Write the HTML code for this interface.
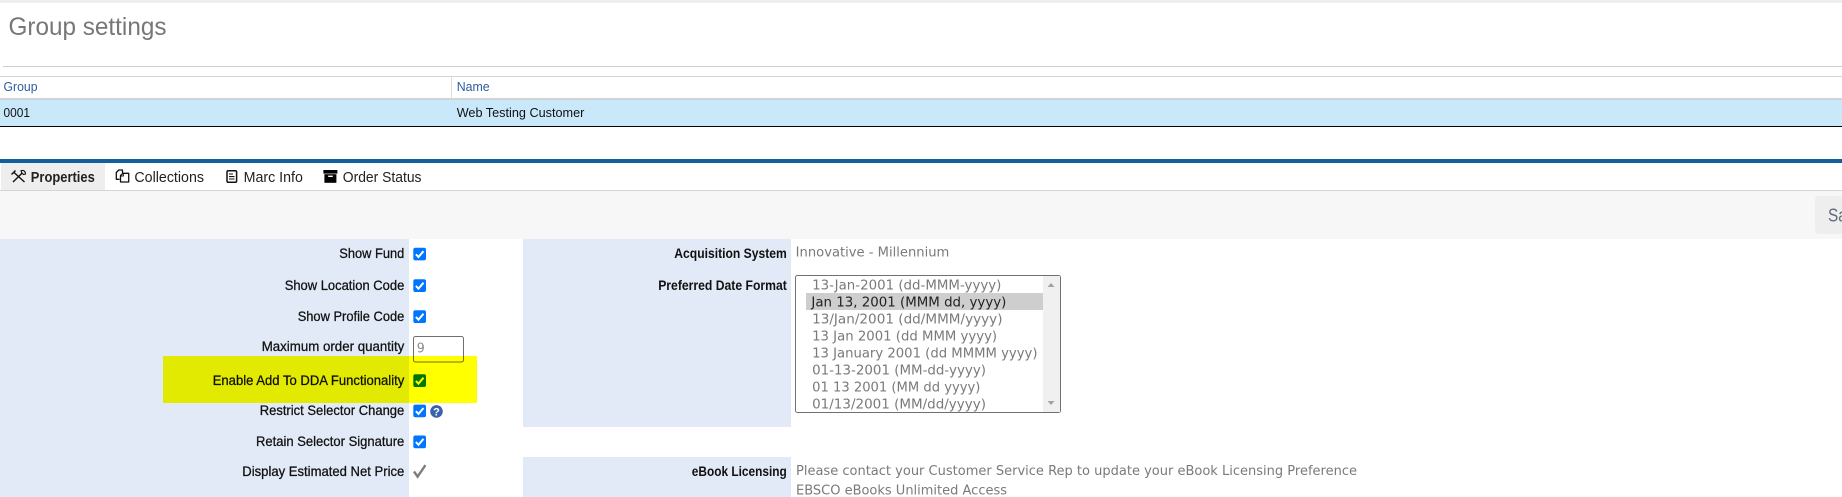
<!DOCTYPE html>
<html lang="en"><head><meta charset="utf-8"><title>Group settings</title>
<style>
html,body{margin:0;padding:0;width:1842px;height:497px;overflow:hidden;background:#fff}
svg{display:block}
text{font-family:"Liberation Sans",sans-serif}
.t{font-size:14px;fill:#111;stroke:#111;stroke-width:.28px}
.b{font-size:14px;font-weight:bold;fill:#111}
.v{font-family:"DejaVu Sans",sans-serif;font-size:13px;fill:#7a7a7a}
.h{font-size:13px;fill:#2c5ea0}
.r{font-size:13px;fill:#111}
.n{font-size:15px;fill:#222}
</style></head><body>
<svg xmlns="http://www.w3.org/2000/svg" width="1842" height="497" viewBox="0 0 1842 497">
<defs>
<g id="cb"><rect width="12.7" height="12.7" rx="2" fill="#0075ff"/><path d="M2.6 6.6 5.2 9.3 10.2 3.4" fill="none" stroke="#fff" stroke-width="2"/></g>
</defs>
<rect width="1842" height="497" fill="#fff"/>
<rect width="1842" height="3" fill="#eeeeee"/>
<text x="8.5" y="35" font-size="25" fill="#777" textLength="158" lengthAdjust="spacingAndGlyphs">Group settings</text>
<rect x="3" y="66" width="1839" height="1" fill="#cfcfcf"/>
<rect x="0" y="76" width="1842" height="1" fill="#d4d4d4"/>
<rect x="451" y="77" width="1" height="21" fill="#dddddd"/>
<text class="h" x="3.5" y="91" textLength="34" lengthAdjust="spacingAndGlyphs">Group</text>
<text class="h" x="456.7" y="91" textLength="33" lengthAdjust="spacingAndGlyphs">Name</text>
<rect y="98" width="1842" height="2" fill="#d3d3d3"/>
<rect y="100" width="1842" height="26" fill="#c9e9fb"/>
<rect y="126" width="1842" height="1" fill="#000"/>
<text class="r" x="3.5" y="117" textLength="26.5" lengthAdjust="spacingAndGlyphs">0001</text>
<text class="r" x="456.7" y="117" textLength="127.7" lengthAdjust="spacingAndGlyphs">Web Testing Customer</text>
<rect y="159" width="1842" height="4" fill="#135e9e"/>
<rect x="1" y="163" width="104" height="27" fill="#eeeeee"/>
<rect y="190" width="1842" height="1" fill="#d4d4d4"/>
<rect y="191" width="1842" height="48" fill="#f7f7f7"/>
<g fill="none" stroke="#111" stroke-width="1.4">
<path d="M13.5 172 24.5 182"/>
<path d="M11.5 174.5 15.5 170.5"/>
<path d="M13 182 22.5 172.8"/>
<path d="M21 170.8C23 169.8 25.5 171 25.5 174L23.5 174.5 21.8 173 21 170.8Z" stroke-width="1.1"/>
</g>
<g fill="none" stroke="#111" stroke-width="1.3" stroke-linejoin="round">
<path d="M119.5 179.3H116.3V172.5L118.8 170H122.5V173"/>
<path d="M120.5 175.5 123 173.3H128.7V182H120.5Z"/>
<path d="M123.4 173.5V176H120.8" stroke-width=".9"/>
</g>
<text class="n" x="30.8" y="182" textLength="64" lengthAdjust="spacingAndGlyphs" style="font-weight:bold">Properties</text>
<text class="n" x="134.4" y="182" textLength="69.6" lengthAdjust="spacingAndGlyphs">Collections</text>
<rect x="227" y="170.8" width="9.6" height="11.4" rx="1.2" fill="none" stroke="#111" stroke-width="1.5"/>
<path d="M229 174H233M229 176.6H234.5M229 179H234.5" stroke="#111" stroke-width="1.1" fill="none"/>
<text class="n" x="243.6" y="182" textLength="59.3" lengthAdjust="spacingAndGlyphs">Marc Info</text>
<rect x="323.4" y="170" width="14" height="3.6" fill="#000"/>
<rect x="324.4" y="174.2" width="12" height="8.6" fill="#000"/>
<rect x="328.2" y="175.6" width="4.6" height="1.4" fill="#fff"/>
<text class="n" x="342.8" y="182" textLength="78.7" lengthAdjust="spacingAndGlyphs">Order Status</text>
<rect x="1815" y="196" width="40" height="38" rx="4" fill="#eeeeee"/>
<text x="1828" y="221.3" font-size="18" fill="#5f6b78" textLength="35" lengthAdjust="spacingAndGlyphs">Save</text>

<rect x="0" y="239" width="409" height="258" fill="#e1eaf6"/>
<rect x="523" y="239" width="268" height="188" fill="#e1eaf6"/>
<rect x="523" y="457" width="268" height="40" fill="#e1eaf6"/>

<text class="t" x="339.3" y="258" textLength="65" lengthAdjust="spacingAndGlyphs">Show Fund</text>
<text class="t" x="284.7" y="290" textLength="119.6" lengthAdjust="spacingAndGlyphs">Show Location Code</text>
<text class="t" x="297.7" y="321" textLength="106.6" lengthAdjust="spacingAndGlyphs">Show Profile Code</text>
<text class="t" x="261.7" y="351" textLength="142.6" lengthAdjust="spacingAndGlyphs">Maximum order quantity</text>
<text class="t" x="212.7" y="385" textLength="191.6" lengthAdjust="spacingAndGlyphs">Enable Add To DDA Functionality</text>
<text class="t" x="259.7" y="415" textLength="144.6" lengthAdjust="spacingAndGlyphs">Restrict Selector Change</text>
<text class="t" x="256" y="446" textLength="148.3" lengthAdjust="spacingAndGlyphs">Retain Selector Signature</text>
<text class="t" x="242.3" y="476" textLength="162" lengthAdjust="spacingAndGlyphs">Display Estimated Net Price</text>

<use href="#cb" x="413.3" y="247.7"/>
<use href="#cb" x="413.3" y="279.3"/>
<use href="#cb" x="413.3" y="310.3"/>
<use href="#cb" x="413.3" y="374.3"/>
<use href="#cb" x="413.3" y="404.6"/>
<use href="#cb" x="413.3" y="435.5"/>
<rect x="413.5" y="336.5" width="50" height="25.5" rx="2" fill="#fff" stroke="#6f6f6f"/>
<text class="v" x="416.7" y="352.3" style="fill:#8a8a8a" textLength="8" lengthAdjust="spacingAndGlyphs">9</text>
<circle cx="436.5" cy="411.4" r="6.3" fill="#3a62ad"/>
<text x="436.5" y="415.6" text-anchor="middle" font-size="11" font-weight="bold" fill="#fff">?</text>
<path d="M414 471.5 417.6 476.6 425.4 465.2" fill="none" stroke="#7d7d7d" stroke-width="2.4"/>

<text class="b" x="674.3" y="258" textLength="112.5" lengthAdjust="spacingAndGlyphs">Acquisition System</text>
<text class="b" x="658.2" y="290" textLength="128.6" lengthAdjust="spacingAndGlyphs">Preferred Date Format</text>
<text class="b" x="691.8" y="476" textLength="95" lengthAdjust="spacingAndGlyphs">eBook Licensing</text>
<text class="v" x="795.7" y="256.7" textLength="153.6" lengthAdjust="spacingAndGlyphs">Innovative - Millennium</text>

<rect x="795.5" y="275.5" width="265" height="137" rx="2" fill="#fff" stroke="#707070"/>
<rect x="1043" y="276" width="17" height="136" fill="#f0f0f0"/>
<path d="M1047.5 287 1051 283 1054.5 287Z" fill="#a3a3a3"/>
<path d="M1047.5 401 1051 405 1054.5 401Z" fill="#a3a3a3"/>
<rect x="806" y="293" width="237" height="17" fill="#cecece"/>
<text class="v" x="812.1" y="289.7" textLength="189.3" lengthAdjust="spacingAndGlyphs">13-Jan-2001 (dd-MMM-yyyy)</text>
<text class="v" x="811.4" y="306.7" style="fill:#222" textLength="195" lengthAdjust="spacingAndGlyphs">Jan 13, 2001 (MMM dd, yyyy)</text>
<text class="v" x="812.1" y="323.7" textLength="190.4" lengthAdjust="spacingAndGlyphs">13/Jan/2001 (dd/MMM/yyyy)</text>
<text class="v" x="812.1" y="340.7" textLength="185" lengthAdjust="spacingAndGlyphs">13 Jan 2001 (dd MMM yyyy)</text>
<text class="v" x="812.1" y="357.7" textLength="225.4" lengthAdjust="spacingAndGlyphs">13 January 2001 (dd MMMM yyyy)</text>
<text class="v" x="812.1" y="374.7" textLength="173.9" lengthAdjust="spacingAndGlyphs">01-13-2001 (MM-dd-yyyy)</text>
<text class="v" x="812.1" y="391.7" textLength="168.3" lengthAdjust="spacingAndGlyphs">01 13 2001 (MM dd yyyy)</text>
<text class="v" x="812.1" y="408.7" textLength="173.9" lengthAdjust="spacingAndGlyphs">01/13/2001 (MM/dd/yyyy)</text>

<text class="v" x="796" y="475" textLength="561" lengthAdjust="spacingAndGlyphs">Please contact your Customer Service Rep to update your eBook Licensing Preference</text>
<text class="v" x="796" y="494.7" textLength="211" lengthAdjust="spacingAndGlyphs">EBSCO eBooks Unlimited Access</text>

<rect x="163" y="356" width="314" height="47" fill="#ffff00" style="mix-blend-mode:multiply"/>
</svg>
</body></html>
